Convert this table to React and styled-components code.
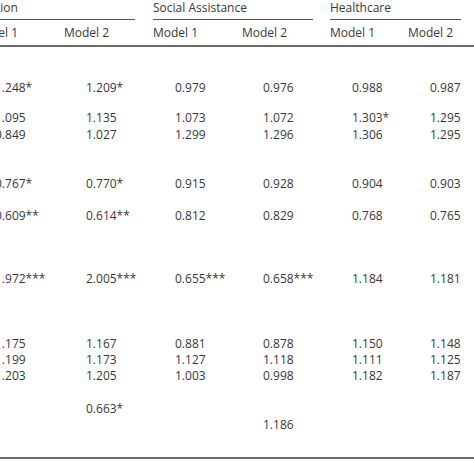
import React from 'react';
import styled, { createGlobalStyle } from 'styled-components';

const GlobalStyle = createGlobalStyle`
  html, body {
    margin: 0;
    padding: 0;
    background: #ffffff;
    overflow: hidden;
  }
`;

const COLS = '91px 89px 89px 88px 78px 66px';

const groups = [
  { title: 'Migration', trim: 18, indent: -9 },
  { title: 'Social Assistance', trim: 17, indent: 0 },
  { title: 'Healthcare', trim: 13, indent: 0 },
];

// gap = space above the row, in px
const rows = [
  { gap: 33, cells: ['1.248*', '1.209*', '0.979', '0.976', '0.988', '0.987'] },
  { gap: 14, cells: ['1.095', '1.135', '1.073', '1.072', '1.303*', '1.295'] },
  { gap: 1, cells: ['0.849', '1.027', '1.299', '1.296', '1.306', '1.295'] },
  { gap: 33, cells: ['0.767*', '0.770*', '0.915', '0.928', '0.904', '0.903'] },
  { gap: 16, cells: ['0.609**', '0.614**', '0.812', '0.829', '0.768', '0.765'] },
  { gap: 47, cells: ['1.972***', '2.005***', '0.655***', '0.658***', '1.184', '1.181'] },
  { gap: 49, cells: ['1.175', '1.167', '0.881', '0.878', '1.150', '1.148'] },
  { gap: 0, cells: ['1.199', '1.173', '1.127', '1.118', '1.111', '1.125'] },
  { gap: 0, cells: ['1.203', '1.205', '1.003', '0.998', '1.182', '1.187'] },
  { gap: 17, cells: ['', '0.663*', '', '', '', ''] },
  { gap: 0, cells: ['', '', '', '1.186', '', ''] },
];

const App = () => (
  <>
    <GlobalStyle />
    <Table>
      <GroupRow>
        {groups.map((g) => (
          <GroupCell key={g.title} $trim={g.trim} $indent={g.indent}>{g.title}</GroupCell>
        ))}
      </GroupRow>
      <ModelRow>
        {['Model 1', 'Model 2', 'Model 1', 'Model 2', 'Model 1', 'Model 2'].map((m, i) => (
          <ModelCell key={i}>{m}</ModelCell>
        ))}
      </ModelRow>
      <Body>
        {rows.map((r, i) => (
          <Row key={i} $gap={r.gap}>
            {r.cells.map((c, j) => (
              <Value key={j} $narrow={j === 3}>{c}</Value>
            ))}
          </Row>
        ))}
      </Body>
      <BottomRule />
    </Table>
  </>
);

const Table = styled.div`
  width: 501px;
  margin-left: -27px;
  font-family: 'Open Sans', 'Liberation Sans', sans-serif;
  font-size: 12px;
  color: #383838;
`;

const GroupRow = styled.div`
  display: grid;
  grid-template-columns: 180px 177px 144px;
`;

const GroupCell = styled.div`
  height: 16px;
  line-height: 16px;
  padding-bottom: 3px;
  margin-right: ${(p) => p.$trim}px;
  text-indent: ${(p) => p.$indent}px;
  border-bottom: 1px solid #555555;
  white-space: nowrap;
  overflow: hidden;
`;

const ModelRow = styled.div`
  display: grid;
  grid-template-columns: ${COLS};
  padding-top: 5px;
  padding-bottom: 4px;
  border-bottom: 2px solid #6a6a6a;
`;

const ModelCell = styled.div`
  height: 16px;
  line-height: 16px;
`;

const Body = styled.div`
  display: flex;
  flex-direction: column;
`;

const Row = styled.div`
  display: grid;
  grid-template-columns: ${COLS};
  margin-top: ${(p) => p.$gap}px;
`;

const Value = styled.div`
  height: 16px;
  line-height: 16px;
  padding-left: ${(p) => (p.$narrow ? 21 : 22)}px;
  white-space: nowrap;
`;

const BottomRule = styled.div`
  margin-top: 24px;
  border-top: 2px solid #6a6a6a;
`;

export default App;
